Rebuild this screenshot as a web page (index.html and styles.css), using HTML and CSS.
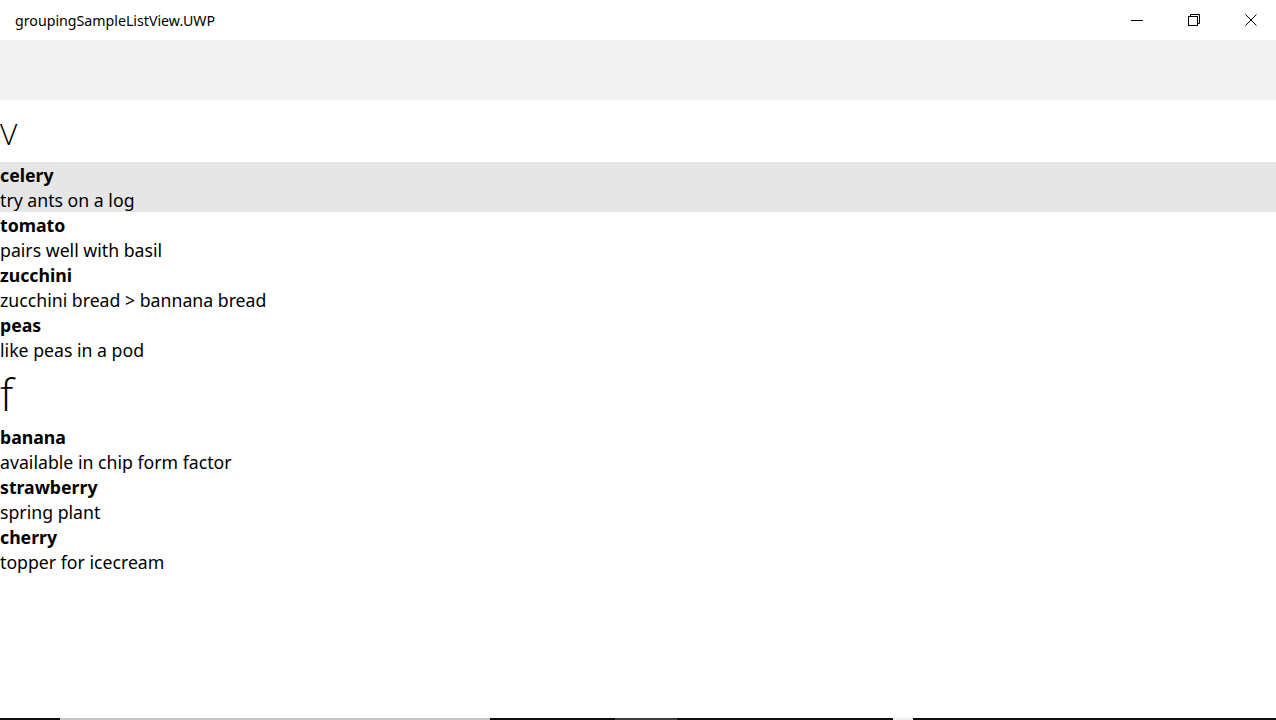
FILE: index.html
```html
<!DOCTYPE html>
<html lang="en">
<head>
<meta charset="utf-8">
<title>groupingSampleListView.UWP</title>
<link rel="stylesheet" href="styles.css">
</head>
<body>
<div class="window">
  <header class="titlebar">
    <span class="title">groupingSampleListView.UWP</span>
    <div class="caption">
      <div class="cbtn">
        <svg width="13" height="13" viewBox="0 0 13 13"><path d="M0 6.5H12" stroke="#000" stroke-width="1" fill="none"/></svg>
      </div>
      <div class="cbtn">
        <svg width="13" height="13" viewBox="0 0 13 13" fill="none" stroke="#000" stroke-width="1"><rect x="0.5" y="2.5" width="9" height="9"/><path d="M2.5 2.5V0.5H11.5V9.5H9.5"/></svg>
      </div>
      <div class="cbtn">
        <svg width="13" height="13" viewBox="0 0 13 13" fill="none" stroke="#000" stroke-width="1"><path d="M0.5 0.5L11.5 11.5M11.5 0.5L0.5 11.5"/></svg>
      </div>
    </div>
  </header>
  <div class="toolbar"></div>
  <main class="list">
    <section class="group">
      <h2 class="ghead">V</h2>
      <div class="item selected"><div class="name">celery</div><div class="desc">try ants on a log</div></div>
      <div class="item"><div class="name">tomato</div><div class="desc">pairs well with basil</div></div>
      <div class="item"><div class="name">zucchini</div><div class="desc">zucchini bread &gt; bannana bread</div></div>
      <div class="item"><div class="name">peas</div><div class="desc">like peas in a pod</div></div>
    </section>
    <section class="group">
      <h2 class="ghead tall">f</h2>
      <div class="item"><div class="name">banana</div><div class="desc">available in chip form factor</div></div>
      <div class="item"><div class="name">strawberry</div><div class="desc">spring plant</div></div>
      <div class="item"><div class="name">cherry</div><div class="desc">topper for icecream</div></div>
    </section>
  </main>
  <div class="taskstrip">
    <div class="seg dark w60"></div>
    <div class="seg light w430"></div>
    <div class="seg dark w125"></div>
    <div class="seg mid w62"></div>
    <div class="seg dark w216"></div>
    <div class="seg pale w20"></div>
    <div class="seg dark grow"></div>
  </div>
</div>
</body>
</html>
```

FILE: styles.css
```css
* { box-sizing: border-box; }
html, body { margin: 0; padding: 0; }
body {
  background: #fff;
  color: #000;
  font-family: "Noto Sans", "Open Sans", sans-serif;
}
.window {
  width: 1276px;
  height: 720px;
  display: flex;
  flex-direction: column;
  overflow: hidden;
}
.titlebar {
  height: 40px;
  flex: 0 0 40px;
  display: flex;
  align-items: center;
  justify-content: space-between;
  background: #fff;
}
.title {
  padding-left: 15px;
  font-size: 14.2px;
  padding-top: 1px;
}
.caption { display: flex; height: 40px; }
.cbtn {
  width: 57px;
  height: 40px;
  padding-left: 8px;
  display: flex;
  align-items: center;
  justify-content: center;
}
.cbtn svg { display: block; }
.toolbar {
  height: 60px;
  flex: 0 0 60px;
  background: #f2f2f2;
}
.list { flex: 1; }
.ghead {
  margin: 0;
  height: 62px;
  font-weight: 300;
  font-size: 30px;
  line-height: 68px;
  font-family: "Open Sans", "Noto Sans", sans-serif;
}
.ghead.tall {
  font-size: 44px;
  line-height: 62px;
  padding-top: 1px;
}
.item {
  height: 50px;
  font-size: 17.7px;
  line-height: 25px;
  padding-top: 1px;
}
.item.selected { background: #e6e6e6; }
.name { font-weight: 700; }
.taskstrip {
  height: 2px;
  flex: 0 0 2px;
  display: flex;
}
.seg { height: 2px; }
.dark { background: #0b0f14; }
.light { background: #c4c4c4; }
.mid { background: #3b3d40; }
.pale { background: #eeeeee; }
.w60 { width: 60px; }
.w430 { width: 430px; }
.w125 { width: 125px; }
.w62 { width: 62px; }
.w216 { width: 216px; }
.w20 { width: 20px; }
.grow { flex: 1; }
```
